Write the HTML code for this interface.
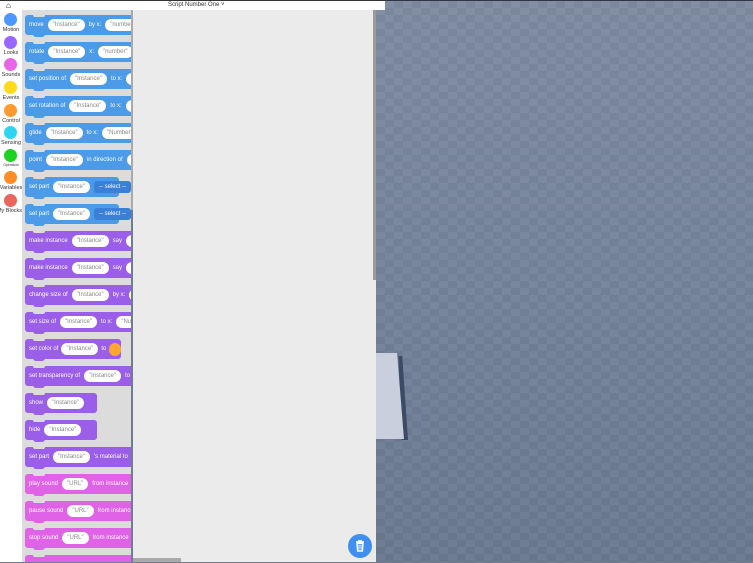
<!DOCTYPE html><html><head><style>
*{margin:0;padding:0;box-sizing:border-box}
body{width:753px;height:562px;overflow:hidden;position:relative;font-family:"Liberation Sans",sans-serif;background:#6f7d91}
#bg{position:absolute;left:376px;top:0;width:377px;height:562px;background:
repeating-conic-gradient(rgba(255,255,255,.035) 0 25%,rgba(0,0,0,.02) 0 50%) 0 0/18px 14px,
linear-gradient(#7d8aa0,#73829a 50%,#6a788f);border-top:1px solid #334}
#obj{position:absolute;left:376px;top:353px;width:28px;height:86px;background:#c9cfdc;clip-path:polygon(0 0,75% 0,100% 100%,0 100%)}
#objs{position:absolute;left:376px;top:356px;width:32px;height:84px;background:#3c4a66;clip-path:polygon(70% 0,82% 0,100% 100%,80% 100%)}
#hdr{position:absolute;left:0;top:0;width:385px;height:10px;background:#fff;border-top:1px solid #333}
#hdr span{position:absolute;left:168px;top:1px;font-size:6px;color:#333}
#side{position:absolute;left:0;top:10px;width:22px;height:552px;background:#fff}
.c{position:absolute;left:4px;width:13px;height:13px;border-radius:50%}
.l{position:absolute;left:-3px;width:28px;text-align:center;font-size:5.5px;color:#333;white-space:nowrap;overflow:hidden}
#fly{position:absolute;left:22px;top:10px;width:109px;height:552px;background:#dcdcdc;overflow:hidden}
#ws{position:absolute;left:133px;top:10px;width:243px;height:552px;background:#ebebeb}
#vs{position:absolute;left:373px;top:10px;width:3px;height:270px;background:#9a9a9a}
#fs{position:absolute;left:131px;top:10px;width:2px;height:200px;background:#aaa}
#hs{position:absolute;left:133px;top:558px;width:48px;height:4px;background:#aaa}
.b{position:absolute;left:3px;height:20px;border-radius:3px;display:flex;align-items:center;gap:4px;padding-left:4px;font-size:6px;color:#fff;white-space:nowrap}
.b:after{content:"";position:absolute;left:8px;bottom:-2px;width:12px;height:3px;background:inherit;border-radius:0 0 4px 4px}
.b:before{content:"";position:absolute;left:8px;top:0;width:12px;height:2px;background:#dcdcdc;border-radius:0 0 4px 4px}
.f{background:#fff;color:#888;border-radius:7px;padding:3px 5px;font-size:6px}
.s{border-radius:3px;padding:3px 5px;color:#fff}
.bl{background:#4c9be8}.pu{background:#9a5ee8}.pk{background:#e062e6}
#trash{position:absolute;left:348px;top:534px;width:24px;height:24px;border-radius:50%;background:#3f8ff0}
</style></head><body>
<div id="bg"></div><div id="objs"></div><div id="obj"></div>
<div id="hdr"><span>Script Number One ˅</span><b style="position:absolute;left:6px;top:0;font-size:8px;line-height:9px">⌂</b></div>
<div id="side">
<div class="c" style="top:3px;background:#4c97ff"></div><div class="l" style="top:17px">Motion</div>
<div class="c" style="top:26px;background:#9966ff"></div><div class="l" style="top:40px">Looks</div>
<div class="c" style="top:48px;background:#e766e6"></div><div class="l" style="top:62px">Sounds</div>
<div class="c" style="top:71px;background:#ffd91a"></div><div class="l" style="top:85px">Events</div>
<div class="c" style="top:94px;background:#ff9a2e"></div><div class="l" style="top:108px">Control</div>
<div class="c" style="top:116px;background:#2fd5f0"></div><div class="l" style="top:130px">Sensing</div>
<div class="c" style="top:139px;background:#1fd21f"></div><div class="l" style="top:153px;font-size:3.5px">Operators</div>
<div class="c" style="top:161px;background:#ff8c26"></div><div class="l" style="top:175px">Variables</div>
<div class="c" style="top:184px;background:#e8665e"></div><div class="l" style="top:198px;text-align:right;left:-6px">My Blocks</div>
</div>
<div id="fly">
<div class="b bl" style="top:5px;width:130px">move <span class="f">"Instance"</span> by x: <span class="f">"number"</span> y:</div>
<div class="b bl" style="top:32px;width:130px">rotate <span class="f">"Instance"</span> x: <span class="f">"number"</span> y:</div>
<div class="b bl" style="top:59px;width:130px">set position of <span class="f">"Instance"</span> to x: <span class="f">"Number"</span></div>
<div class="b bl" style="top:86px;width:130px">set rotation of <span class="f">"Instance"</span> to x: <span class="f">"Number"</span></div>
<div class="b bl" style="top:113px;width:130px">glide <span class="f">"Instance"</span> to x: <span class="f">"Number"</span> y</div>
<div class="b bl" style="top:140px;width:130px">point <span class="f">"Instance"</span> in direction of <span class="f">"Instance"</span></div>
<div class="b bl" style="top:167px;width:94px">set part <span class="f">"Instance"</span> <span class="s" style="background:#3a80d8">-- select --</span></div>
<div class="b bl" style="top:194px;width:94px">set part <span class="f">"Instance"</span> <span class="s" style="background:#3a80d8">-- select --</span></div>
<div class="b pu" style="top:221px;width:130px">make instance <span class="f">"Instance"</span> say <span class="f">"text"</span></div>
<div class="b pu" style="top:248px;width:130px">make instance <span class="f">"Instance"</span> say <span class="f">"text"</span></div>
<div class="b pu" style="top:275px;width:130px">change size of <span class="f">"Instance"</span> by x: <span class="f">"Number"</span></div>
<div class="b pu" style="top:302px;width:130px">set size of <span class="f">"Instance"</span> to x: <span class="f">"Number"</span></div>
<div class="b pu" style="top:329px;width:96px;gap:3px">set color of <span class="f">"Instance"</span> to <span style="display:inline-block;width:17px;height:13px;border-radius:7px;background:#ffa531"></span></div>
<div class="b pu" style="top:356px;width:130px">set transparency of <span class="f">"Instance"</span> to <span class="f">"Number"</span></div>
<div class="b pu" style="top:383px;width:72px">show <span class="f">"Instance"</span></div>
<div class="b pu" style="top:410px;width:72px">hide <span class="f">"Instance"</span></div>
<div class="b pu" style="top:437px;width:130px">set part <span class="f">"Instance"</span> 's material to <span class="s" style="background:#7a45c8">-- select --</span></div>
<div class="b pk" style="top:464px;width:130px">play sound <span class="f">"URL"</span> from instance <span class="f">"Instance"</span></div>
<div class="b pk" style="top:491px;width:130px">pause sound <span class="f">"URL"</span> from instance <span class="f">"Instance"</span></div>
<div class="b pk" style="top:518px;width:130px">stop sound <span class="f">"URL"</span> from instance <span class="f">"Instance"</span></div>
<div class="b pk" style="top:545px;width:130px">&nbsp;</div>
</div>
<div id="fs"></div>
<div id="ws"></div><div id="vs"></div><div id="hs"></div>
<div id="trash"><svg width="24" height="24" viewBox="0 0 24 24"><path d="M8 8h8M10.5 8V6.8h3V8M9 9.5h6l-.6 7.5h-4.8z" fill="none" stroke="#fff" stroke-width="1.4"/><path d="M11 11v4.5M13 11v4.5" stroke="#fff" stroke-width="1"/></svg></div>
</body></html>
